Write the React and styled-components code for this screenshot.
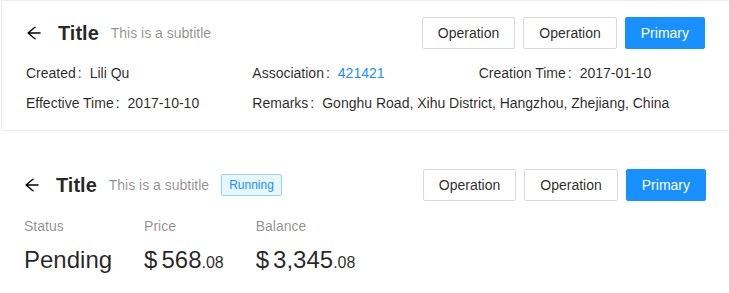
import React from "react";
import styled, { createGlobalStyle } from "styled-components";

const GlobalStyle = createGlobalStyle`
  html, body {
    margin: 0;
    padding: 0;
    background: #fff;
    overflow: hidden;
  }
  body {
    font-family: "Liberation Sans", Arial, sans-serif;
    font-size: 14px;
    color: rgba(0, 0, 0, 0.85);
    -webkit-font-smoothing: antialiased;
  }
`;

const Page = styled.div`
  width: 730px;
`;

const Header = styled.div`
  box-sizing: border-box;
  padding: 16px 24px;
  background: #fff;
  ${({ $bordered }) =>
    $bordered
      ? `
    margin-left: 1px;
    border: 1px solid rgb(235, 237, 240);
  `
      : `
    margin-top: 22px;
  `}
`;

const Heading = styled.div`
  display: flex;
  justify-content: space-between;
  align-items: center;
  height: 32px;
`;

const HeadingLeft = styled.div`
  display: flex;
  align-items: center;
  overflow: hidden;
`;

const Back = styled.div`
  display: flex;
  align-items: center;
  margin-right: 16px;
  color: #000;
  cursor: pointer;
  line-height: 1;

  svg {
    width: 16px;
    height: 16px;
  }
`;

const Title = styled.span`
  margin-right: 12px;
  font-size: 20px;
  font-weight: 600;
  line-height: 32px;
  color: rgba(0, 0, 0, 0.85);
`;

const SubTitle = styled.span`
  margin-right: 12px;
  font-size: 14px;
  line-height: 22px;
  color: rgba(0, 0, 0, 0.45);
`;

const Tag = styled.span`
  box-sizing: border-box;
  display: inline-block;
  height: 22px;
  padding: 0 7px;
  font-size: 12px;
  line-height: 20px;
  color: #1890ff;
  background: #e6f7ff;
  border: 1px solid #91d5ff;
  border-radius: 2px;
`;

const Extra = styled.div`
  display: flex;
  gap: 8px;
`;

const Button = styled.button`
  box-sizing: border-box;
  height: 32px;
  padding: 4px 15px;
  font-family: inherit;
  font-size: 14px;
  line-height: 22px;
  border-radius: 2px;
  cursor: pointer;
  color: ${({ $primary }) => ($primary ? "#fff" : "rgba(0, 0, 0, 0.85)")};
  background: ${({ $primary }) => ($primary ? "#1890ff" : "#fff")};
  border: 1px solid ${({ $primary }) => ($primary ? "#1890ff" : "#d9d9d9")};
`;

const Content = styled.div`
  padding-top: ${({ $top }) => $top || 13}px;
`;

const Descriptions = styled.div`
  display: grid;
  grid-template-columns: repeat(3, 1fr);
  row-gap: 8px;
`;

const Item = styled.div`
  display: flex;
  grid-column: span ${({ $span }) => $span || 1};
  font-size: 14px;
  line-height: 22px;
`;

const Label = styled.span`
  color: rgba(0, 0, 0, 0.85);

  &::after {
    content: ":";
    margin: 0 8px 0 2px;
  }
`;

const Value = styled.span`
  color: rgba(0, 0, 0, 0.85);
`;

const Link = styled.a`
  color: #1890ff;
  text-decoration: none;
`;

const Stats = styled.div`
  display: flex;
`;

const Statistic = styled.div`
  margin: ${({ $spaced }) => ($spaced ? "0 32px" : "0")};
`;

const StatTitle = styled.div`
  margin-bottom: 4px;
  font-size: 14px;
  line-height: 22px;
  color: rgba(0, 0, 0, 0.45);
`;

const StatValue = styled.div`
  font-size: 24px;
  line-height: 38px;
  color: rgba(0, 0, 0, 0.85);
`;

const Prefix = styled.span`
  margin-right: 4px;
`;

const Decimal = styled.span`
  font-size: 16px;
`;

const ArrowLeft = () => (
  <svg viewBox="64 64 896 896" fill="currentColor" aria-hidden="true">
    <path d="M872 474H286.9l350.3-304c5.6-4.9 2.2-14-5.2-14h-88.5c-3.9 0-7.6 1.4-10.5 3.9L155 487.8a31.96 31.96 0 000 48.3L535.1 866c1.5 1.3 3.3 2 5.2 2h91.5c7.4 0 10.8-9.2 5.2-14L286.9 550H872c4.4 0 8-3.6 8-8v-60c0-4.4-3.6-8-8-8z" />
  </svg>
);

const Actions = () => (
  <Extra>
    <Button>Operation</Button>
    <Button>Operation</Button>
    <Button $primary>Primary</Button>
  </Extra>
);

const details = [
  { label: "Created", value: "Lili Qu" },
  { label: "Association", value: "421421", link: true },
  { label: "Creation Time", value: "2017-01-10" },
  { label: "Effective Time", value: "2017-10-10" },
  {
    label: "Remarks",
    value: "Gonghu Road, Xihu District, Hangzhou, Zhejiang, China",
    span: 2,
  },
];

const stats = [
  { title: "Status", value: "Pending" },
  { title: "Price", prefix: "$", int: "568", decimal: ".08", spaced: true },
  { title: "Balance", prefix: "$", int: "3,345", decimal: ".08" },
];

const App = () => {
  return (
    <Page>
      <GlobalStyle />

      <Header $bordered>
        <Heading>
          <HeadingLeft>
            <Back>
              <ArrowLeft />
            </Back>
            <Title>Title</Title>
            <SubTitle>This is a subtitle</SubTitle>
          </HeadingLeft>
          <Actions />
        </Heading>
        <Content>
          <Descriptions>
            {details.map((d) => (
              <Item key={d.label} $span={d.span}>
                <Label>{d.label}</Label>
                {d.link ? <Link href="#">{d.value}</Link> : <Value>{d.value}</Value>}
              </Item>
            ))}
          </Descriptions>
        </Content>
      </Header>

      <Header>
        <Heading>
          <HeadingLeft>
            <Back>
              <ArrowLeft />
            </Back>
            <Title>Title</Title>
            <SubTitle>This is a subtitle</SubTitle>
            <Tag>Running</Tag>
          </HeadingLeft>
          <Actions />
        </Heading>
        <Content $top={14}>
          <Stats>
            {stats.map((s) => (
              <Statistic key={s.title} $spaced={s.spaced}>
                <StatTitle>{s.title}</StatTitle>
                <StatValue>
                  {s.prefix && <Prefix>{s.prefix}</Prefix>}
                  {s.int ? (
                    <>
                      {s.int}
                      <Decimal>{s.decimal}</Decimal>
                    </>
                  ) : (
                    s.value
                  )}
                </StatValue>
              </Statistic>
            ))}
          </Stats>
        </Content>
      </Header>
    </Page>
  );
};

export default App;
